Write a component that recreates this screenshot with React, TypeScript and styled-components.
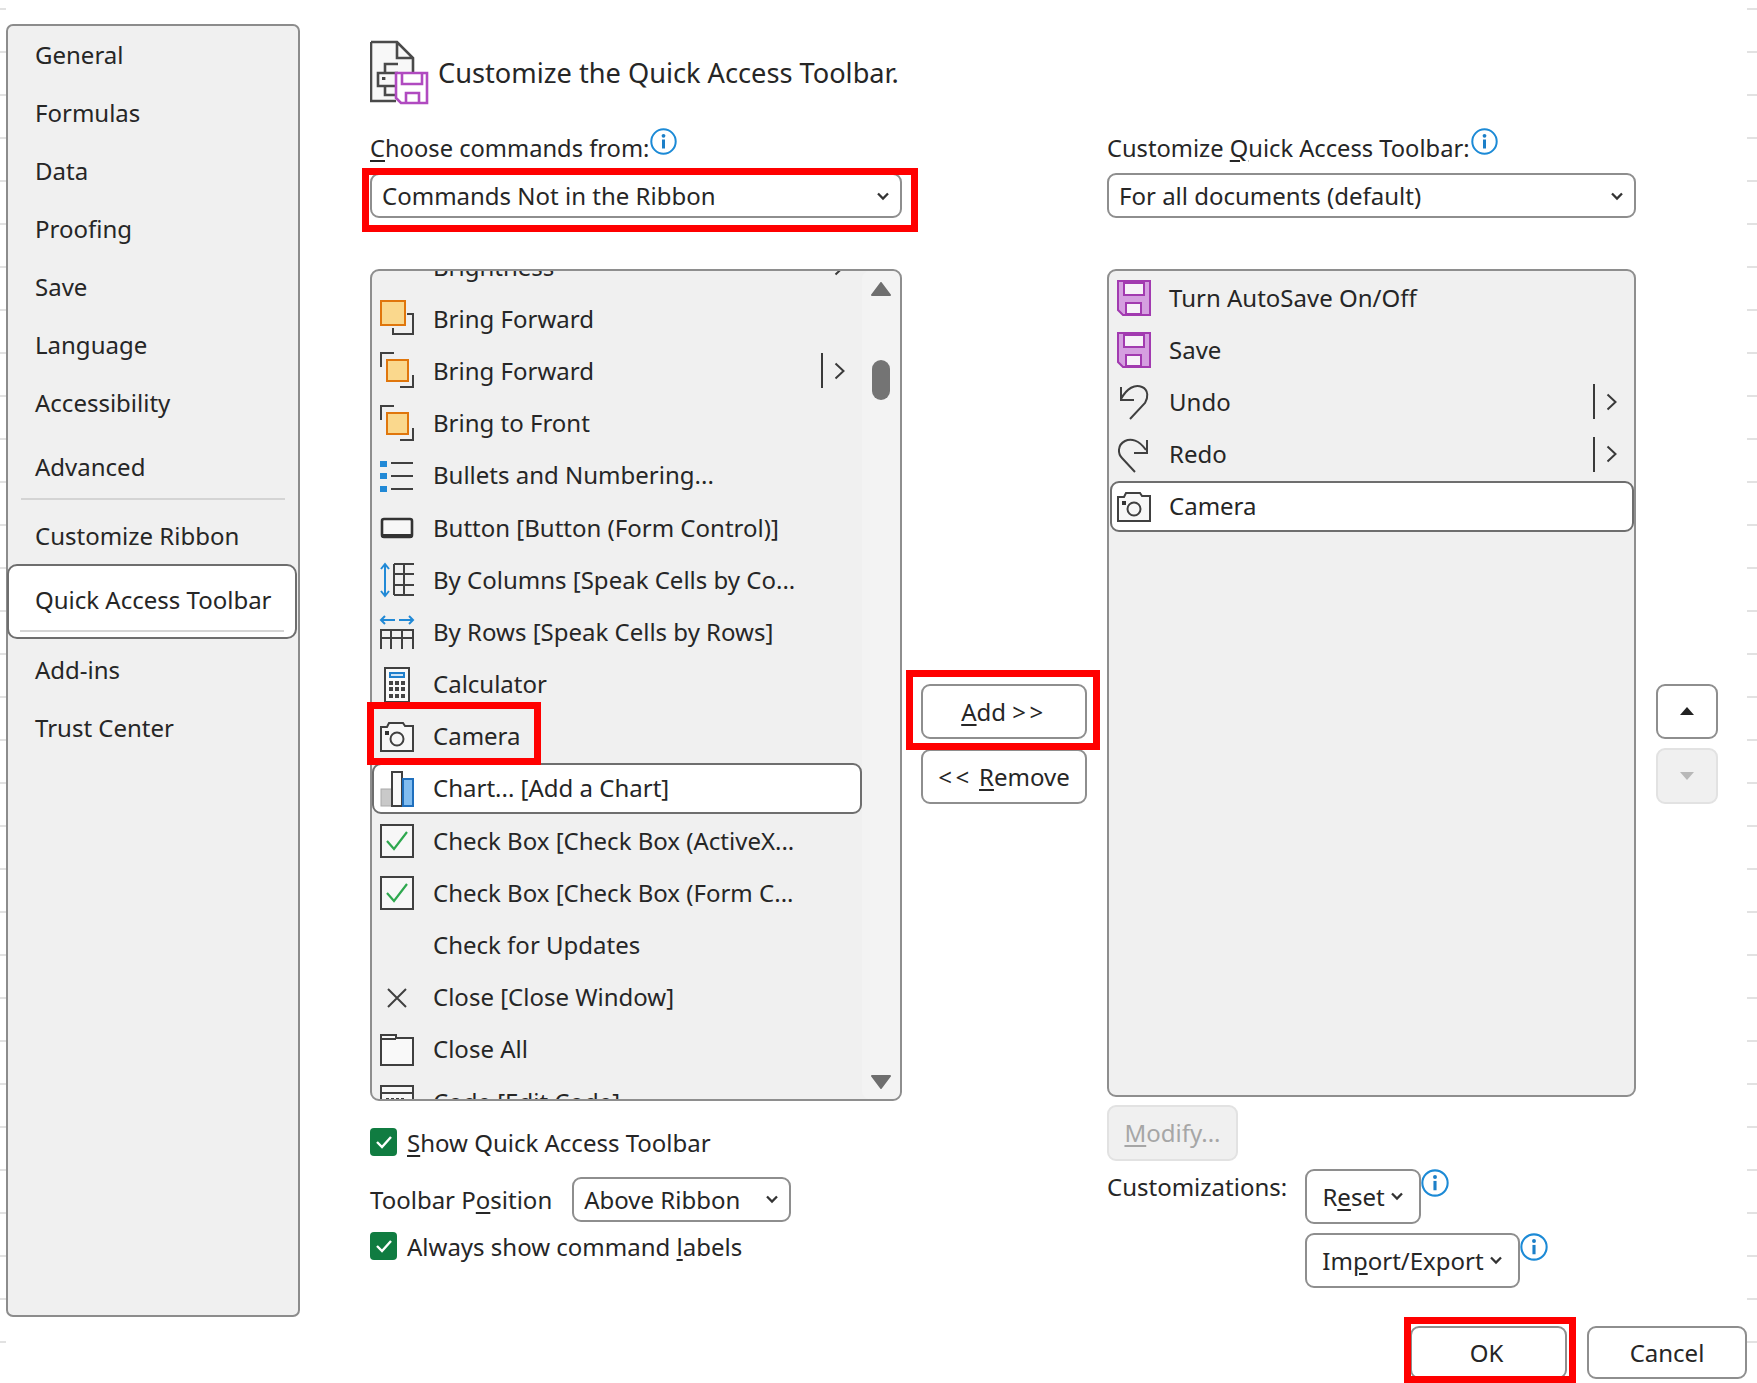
import React from "react";
import styled, { createGlobalStyle } from "styled-components";

const Global = createGlobalStyle`
  html, body { margin: 0; padding: 0; background: #fff; }
  #root { width: 1757px; height: 1383px; }
  * { box-sizing: border-box; }
`;

const tick = "repeating-linear-gradient(to bottom, transparent 0, transparent 8px, #e2e2e2 8px, #e2e2e2 10px, transparent 10px, transparent 43px)";

const Page = styled.div`
  position: relative;
  width: 1757px;
  height: 1383px;
  overflow: hidden;
  background-color: #fff;
  background-image: ${tick}, ${tick};
  background-size: 6px 1346px, 10px 1346px;
  background-position: left top, right top;
  background-repeat: no-repeat;
  font-family: "Noto Sans", "Open Sans", sans-serif;
  font-size: 24px;
  color: #262626;
  display: grid;
  grid-template-columns: 298px 1fr;
  padding: 24px 0 0 6px;
  u { text-underline-offset: 3px; text-decoration-thickness: 2px; }
`;

const Nav = styled.nav`
  width: 294px;
  height: 1293px;
  background: #f0f0f0;
  border: 2px solid #8c8c8c;
  border-radius: 7px;
  display: flex;
  flex-direction: column;
  align-items: stretch;
`;

const NavItem = styled.div<{ $h?: number; $shift?: number }>`
  height: ${(p) => p.$h ?? 58}px;
  display: flex;
  align-items: center;
  padding-left: 27px;
  padding-top: ${(p) => Math.max(p.$shift ?? 0, 0)}px;
  padding-bottom: ${(p) => Math.max(-(p.$shift ?? 0), 0)}px;
  flex: none;
`;

const NavRule = styled.div`
  height: 2px;
  margin: 0 13px;
  background: #d4d4d4;
  flex: none;
`;

const NavActive = styled.div`
  height: 75px;
  margin: 0 1px 0 -1px;
  background: #fff;
  border: 2px solid #6e6e6e;
  border-radius: 10px;
  display: flex;
  flex-direction: column;
  flex: none;
  padding: 0 0 4px 26px;
  position: relative;
  justify-content: center;
  &::after {
    content: "";
    position: absolute;
    left: 11px;
    right: 11px;
    bottom: 5px;
    height: 2px;
    background: #d4d4d4;
  }
`;

const Main = styled.main`
  display: flex;
  flex-direction: column;
  padding: 0 0 4px 66px;
`;

const Header = styled.header`
  height: 99px;
  margin-top: -8px;
  display: flex;
  align-items: center;
  gap: 8px;
  font-size: 27.2px;
  padding-top: 14px;
  flex: none;
`;

const Columns = styled.div`
  display: grid;
  grid-template-columns: 532px 205px 529px 1fr;
  flex: 1;
`;

const Column = styled.section`
  display: flex;
  flex-direction: column;
`;

const Label = styled.div`
  height: 50px;
  margin-bottom: 8px;
  display: flex;
  align-items: flex-end;
  line-height: 34px;
  font-size: 23.7px;
  white-space: nowrap;
`;

const Info = styled.svg`
  width: 27px;
  height: 27px;
  flex: none;
  position: relative;
  top: -10px;
  margin-left: 1px;
`;

const Select = styled.div<{ $w?: number }>`
  position: relative;
  height: 45px;
  width: ${(p) => (p.$w ? `${p.$w}px` : "100%")};
  border: 2px solid #8e8e8e;
  border-radius: 9px;
  background: #fff;
  display: flex;
  align-items: center;
  justify-content: space-between;
  padding: 0 10px 0 10px;
  flex: none;
`;

const Caret = styled.svg`
  width: 14px;
  height: 10px;
  flex: none;
`;

const List = styled.div<{ $h: number }>`
  position: relative;
  height: ${(p) => p.$h}px;
  margin-top: 51px;
  background: #f0f0f0;
  border: 2px solid #8e8e8e;
  border-radius: 9px;
  flex: none;
`;

const ListClip = styled.div<{ $top?: number }>`
  position: relative;
  height: 100%;
  overflow: hidden;
  border-radius: 7px;
  padding-top: ${(p) => p.$top ?? 0}px;
`;

const ScrollRows = styled.div`
  margin-top: -30px;
  padding-right: 38px;
`;

const Row = styled.div`
  position: relative;
  height: 52.2px;
  display: flex;
  align-items: center;
  padding-left: 8px;
  white-space: nowrap;
  &[data-sel="true"]::before {
    content: "";
    position: absolute;
    inset: 0 0 1px 0;
    background: #fff;
    border: 2px solid #6e6e6e;
    border-radius: 9px;
  }
`;

const RowIcon = styled.span`
  position: relative;
  width: 34px;
  height: 38px;
  margin-right: 19px;
  flex: none;
  display: flex;
  align-items: center;
  justify-content: center;
  svg { display: block; overflow: visible; }
`;

const FixedRows = styled.div`
  ${Row}[data-sel="true"]::before { left: 1px; }
  ${RowIcon} { margin-right: 18px; }
`;

const RowText = styled.span`
  position: relative;
  padding-bottom: 2px;
`;

const Sub = styled.span<{ $bare?: boolean }>`
  position: absolute;
  right: 17px;
  top: 8px;
  height: 35px;
  display: flex;
  align-items: center;
  gap: 11px;
  &::before {
    content: "";
    width: 2px;
    height: 35px;
    background: ${(p) => (p.$bare ? "transparent" : "#3a3a3a")};
  }
`;

const Track = styled.div`
  position: absolute;
  right: 0;
  top: 0;
  bottom: 0;
  width: 38px;
  background: #f3f3f3;
  border-radius: 8px;
  display: flex;
  flex-direction: column;
  align-items: center;
  padding: 11px 0 10px 0;
`;

const Thumb = styled.div`
  width: 18px;
  height: 40px;
  margin-top: 63px;
  background: #747474;
  border-radius: 9px;
  flex: none;
`;

const TrackSpacer = styled.div`
  flex: 1;
`;

const Arrow = styled.svg`
  width: 20px;
  height: 15px;
  flex: none;
`;

const Mid = styled(Column)`
  padding: 0 0 0 19px;
  margin-top: 569px;
  gap: 10px;
`;

const Btn = styled.div<{ $w?: number; $h?: number; $off?: boolean }>`
  position: relative;
  width: ${(p) => p.$w ?? 166}px;
  height: ${(p) => p.$h ?? 55}px;
  border: 2px solid ${(p) => (p.$off ? "#e2e2e2" : "#8e8e8e")};
  background: ${(p) => (p.$off ? "#f0f0f0" : "#fff")};
  color: ${(p) => (p.$off ? "#a6a6a6" : "#262626")};
  border-radius: 9px;
  display: flex;
  align-items: center;
  justify-content: center;
  gap: 5px;
  flex: none;
  padding-bottom: 1px;
  white-space: nowrap;
`;

const Chevrons = styled.span`
  letter-spacing: 3.5px;
`;

const ModifyBtn = styled(Btn)`
  margin-top: 8px;
`;

const OkBtn = styled(Btn)`
  padding-right: 4px;
`;

const Highlight = styled.span<{ $t: number; $r: number; $b: number; $l: number }>`
  position: absolute;
  top: ${(p) => -p.$t}px;
  right: ${(p) => -p.$r}px;
  bottom: ${(p) => -p.$b}px;
  left: ${(p) => -p.$l}px;
  border: 7px solid #ff0000;
  pointer-events: none;
  z-index: 3;
`;

const CheckRow = styled.div<{ $mt: number }>`
  display: flex;
  align-items: center;
  gap: 10px;
  margin-top: ${(p) => p.$mt}px;
  height: 30px;
`;

const Check = styled.span`
  width: 27px;
  height: 28px;
  background: #107c41;
  border-radius: 4px;
  display: flex;
  align-items: center;
  justify-content: center;
  flex: none;
`;

const PositionRow = styled.div`
  display: flex;
  align-items: center;
  gap: 20px;
  margin-top: 19px;
  height: 46px;
`;

const CustomRow = styled.div`
  display: grid;
  grid-template-columns: 198px auto;
  margin-top: 8px;
`;

const CustomLabel = styled.div`
  padding-top: 1px;
`;

const Stack = styled.div`
  display: flex;
  flex-direction: column;
  gap: 9px;
`;

const StackLine = styled.div`
  display: flex;
  align-items: flex-start;
`;

const SmallInfo = styled.svg`
  width: 28px;
  height: 28px;
  flex: none;
`;

const Side = styled(Column)`
  padding-left: 20px;
  margin-top: 569px;
  gap: 9px;
`;

const Footer = styled.footer`
  position: relative;
  display: flex;
  justify-content: flex-end;
  gap: 20px;
  padding-right: 10px;
  margin-top: -53px;
  flex: none;
`;

const info = (
  <>
    <circle cx="13.5" cy="13.5" r="12.2" fill="#fff" stroke="#1c8ad6" strokeWidth="2" />
    <rect x="12" y="11.5" width="3" height="9" fill="#1c7fc8" />
    <circle cx="13.5" cy="7.8" r="1.9" fill="#1c7fc8" />
  </>
);

const InfoIcon = () => <Info viewBox="0 0 27 27">{info}</Info>;

const CaretIcon = () => (
  <Caret viewBox="0 0 14 10">
    <path d="M2 2.5 L7 7.5 L12 2.5" fill="none" stroke="#333" strokeWidth="2.3" />
  </Caret>
);

const S = 34;
const Ico = ({ children, w = S, h = S }: { children: React.ReactNode; w?: number; h?: number }) => (
  <svg width={w} height={h} viewBox={`0 0 ${w} ${h}`} fill="none">{children}</svg>
);

const dark = "#404040";
const orange = "#e0760c";
const peach = "#fad88d";

const Brightness = () => (
  <Ico>
    <circle cx="17" cy="4" r="7" fill={peach} stroke={orange} strokeWidth="2" />
    <path d="M17 15v5M8 13l-3 4M26 13l3 4M2 5H7M27 5h5" stroke={orange} strokeWidth="2" />
  </Ico>
);
const BringForward1 = () => (
  <Ico h={38}>
    <path d="M27 14h6v20H13v-6" stroke={dark} strokeWidth="2" />
    <rect x="1" y="1" width="24" height="24" fill={peach} stroke={orange} strokeWidth="2" />
  </Ico>
);
const BringForward2 = () => (
  <Ico h={38}>
    <path d="M1 15V1h13" stroke={dark} strokeWidth="2" />
    <path d="M33 23v12H20" stroke={dark} strokeWidth="2" />
    <rect x="7" y="8" width="21" height="21" fill={peach} stroke={orange} strokeWidth="2" />
  </Ico>
);
const Bullets = () => (
  <Ico>
    <rect x="0" y="2" width="7" height="6" fill="#2189d6" />
    <rect x="0" y="14" width="7" height="6" fill="#2189d6" />
    <rect x="0" y="27" width="7" height="6" fill="#2189d6" />
    <path d="M11 4h22M11 17h22M11 30h22" stroke={dark} strokeWidth="2" />
  </Ico>
);
const ButtonCtl = () => (
  <Ico h={22}>
    <rect x="2" y="2" width="30" height="18" rx="2" fill="#f7f7f7" stroke="#333" strokeWidth="2.6" />
    <path d="M2 19h30" stroke="#333" strokeWidth="4" />
  </Ico>
);
const ByCols = () => (
  <Ico h={36}>
    <path d="M5 2v32" stroke="#2189d6" strokeWidth="2" />
    <path d="M1 7l4-5 4 5M1 29l4 5 4-5" stroke="#2189d6" strokeWidth="2" />
    <path d="M14 2h20M14 12h20M14 23h20M14 33h20M14 2v31M24 2v31" stroke={dark} strokeWidth="2" />
  </Ico>
);
const ByRows = () => (
  <Ico h={36}>
    <path d="M1 6h14M5 2L1 6l4 4M19 6h14M29 2l4 4-4 4" stroke="#2189d6" strokeWidth="2" />
    <path d="M1 35V16h32v19M1 24h32M11 16v19M22 16v19" stroke={dark} strokeWidth="2" />
  </Ico>
);
const Calc = () => (
  <Ico h={36}>
    <rect x="5" y="1" width="24" height="34" fill="#fafafa" stroke={dark} strokeWidth="2" />
    <rect x="9" y="5" width="16" height="6" fill="#1f7fcc" />
    <rect x="11" y="7" width="12" height="2" fill="#cfe4f6" />
    {[14, 20, 27].flatMap((y) =>
      [9, 15, 21].map((x) => <rect key={`${x}-${y}`} x={x} y={y} width="4" height="4" fill="#444" />)
    )}
  </Ico>
);
const Camera = () => (
  <Ico h={30}>
    <path d="M1 29V5h6l2-4h14l2 3h8v25z" fill="#f7f7f7" stroke={dark} strokeWidth="2" />
    <circle cx="17" cy="17" r="6.5" stroke={dark} strokeWidth="2" />
    <rect x="5" y="9" width="4" height="4" fill="#333" />
  </Ico>
);
const Chart = () => (
  <Ico h={36}>
    <rect x="1" y="18" width="11" height="17" fill="#c9c9c9" stroke="#aaa" />
    <rect x="12" y="1" width="10" height="34" fill="#fafafa" stroke={dark} strokeWidth="2" />
    <rect x="23" y="8" width="10" height="27" fill="#82bdf0" stroke="#1f6fbd" strokeWidth="2" />
  </Ico>
);
const CheckIco = () => (
  <Ico>
    <rect x="1" y="1" width="32" height="32" fill="#f7f7f7" stroke={dark} strokeWidth="2" />
    <path d="M7 17l7 8L27 8" stroke="#2ea84f" strokeWidth="2.2" />
  </Ico>
);
const CloseX = () => (
  <Ico h={20}>
    <path d="M8 1l18 18M26 1L8 19" stroke={dark} strokeWidth="2" />
  </Ico>
);
const CloseAll = () => (
  <Ico h={32}>
    <path d="M1 31V1h15v3h17v27z" fill="#f9f9f9" stroke="#3f3f3f" strokeWidth="2" />
    <path d="M1 5h15" stroke="#3f3f3f" strokeWidth="2" />
  </Ico>
);
const Code = () => (
  <Ico h={34}>
    <rect x="1" y="1" width="32" height="32" fill="#f7f7f7" stroke={dark} strokeWidth="2" />
    <path d="M1 8h32" stroke={dark} strokeWidth="2" />
    <path d="M6 14h20" stroke={dark} strokeWidth="2" strokeDasharray="3 2" />
    <circle cx="30" cy="17" r="3" fill="#2189d6" />
  </Ico>
);
const Floppy = () => (
  <Ico h={36}>
    <path d="M1 1h32v34H6l-5-5z" fill="#d59fe0" stroke="#a23ab0" strokeWidth="2" />
    <rect x="7" y="3" width="20" height="12" fill="#f7f2f8" stroke="#a23ab0" strokeWidth="2" />
    <rect x="9" y="23" width="15" height="11" fill="#f7f2f8" stroke="#a23ab0" strokeWidth="2" />
  </Ico>
);
const Undo = () => (
  <Ico h={36}>
    <path d="M4 3v13h13" stroke={dark} strokeWidth="2" />
    <path d="M4 15C10 4 18 0 25 3c7 3 6 11 3 16L13 35" stroke={dark} strokeWidth="2" />
  </Ico>
);
const Redo = () => (
  <Ico h={36}>
    <path d="M30 3v13H17" stroke={dark} strokeWidth="2" />
    <path d="M29 13C22 3 14 1 8 4 0 8 1 17 5 21l13 14" stroke={dark} strokeWidth="2" />
  </Ico>
);

const Chevron = () => (
  <svg width="11" height="18" viewBox="0 0 11 18" fill="none">
    <path d="M1.5 1.5 L9.5 9 L1.5 16.5" stroke="#3a3a3a" strokeWidth="2" />
  </svg>
);

const HeaderIcon = () => (
  <svg width="60" height="66" viewBox="0 0 60 66" fill="none">
    <path d="M1 2h26l16 16v44H1z" fill="#f8f8f8" />
    <path d="M27 2v16h16M1 2h26l16 16v15M1 2v59h25" stroke="#4a4a4a" strokeWidth="2.6" />
    <path d="M28 24H15v9H8v13h7v9h11M15 33h13M15 46h10" stroke="#4a4a4a" strokeWidth="2.6" />
    <rect x="12" y="37" width="3.4" height="3" fill="#444" />
    <path d="M26 33h31v30H31l-5-5z" fill="#fff" stroke="#b04ac0" strokeWidth="2.6" />
    <path d="M32 33v11h20V33M36 63V53h13v10" stroke="#b04ac0" strokeWidth="2.6" />
  </svg>
);

type Item = { icon?: React.ReactNode; text: string; sub?: boolean; bare?: boolean; sel?: boolean };

const leftItems: Item[] = [
  { icon: <Brightness />, text: "Brightness", sub: true, bare: true },
  { icon: <BringForward1 />, text: "Bring Forward" },
  { icon: <BringForward2 />, text: "Bring Forward", sub: true },
  { icon: <BringForward2 />, text: "Bring to Front" },
  { icon: <Bullets />, text: "Bullets and Numbering..." },
  { icon: <ButtonCtl />, text: "Button [Button (Form Control)]" },
  { icon: <ByCols />, text: "By Columns [Speak Cells by Co..." },
  { icon: <ByRows />, text: "By Rows [Speak Cells by Rows]" },
  { icon: <Calc />, text: "Calculator" },
  { icon: <Camera />, text: "Camera" },
  { icon: <Chart />, text: "Chart... [Add a Chart]", sel: true },
  { icon: <CheckIco />, text: "Check Box [Check Box (ActiveX..." },
  { icon: <CheckIco />, text: "Check Box [Check Box (Form C..." },
  { text: "Check for Updates" },
  { icon: <CloseX />, text: "Close [Close Window]" },
  { icon: <CloseAll />, text: "Close All" },
  { icon: <Code />, text: "Code [Edit Code]" },
];

const rightItems: Item[] = [
  { icon: <Floppy />, text: "Turn AutoSave On/Off" },
  { icon: <Floppy />, text: "Save" },
  { icon: <Undo />, text: "Undo", sub: true },
  { icon: <Redo />, text: "Redo", sub: true },
  { icon: <Camera />, text: "Camera", sel: true },
];

const ListRow = ({ item }: { item: Item }) => (
  <Row data-sel={item.sel ? "true" : undefined}>
    <RowIcon>{item.icon}</RowIcon>
    <RowText>{item.text}</RowText>
    {item.sub && (
      <Sub $bare={item.bare}>
        <Chevron />
      </Sub>
    )}
  </Row>
);

const Tick = () => (
  <Check>
    <svg width="18" height="14" viewBox="0 0 18 14" fill="none"><path d="M2 7l5 5 9-10" stroke="#fff" strokeWidth="2.4" /></svg>
  </Check>
);

export default function App() {
  return (
    <>
      <Global />
      <Page>
        <Nav>
          <NavItem $shift={-2}>General</NavItem>
          <NavItem $shift={-2}>Formulas</NavItem>
          <NavItem $shift={-2}>Data</NavItem>
          <NavItem $shift={-2}>Proofing</NavItem>
          <NavItem $shift={-2}>Save</NavItem>
          <NavItem $shift={-2}>Language</NavItem>
          <NavItem $shift={-2}>Accessibility</NavItem>
          <NavItem $h={66} $shift={2}>Advanced</NavItem>
          <NavRule />
          <NavItem $h={64} $shift={6}>Customize Ribbon</NavItem>
          <NavActive>Quick Access Toolbar</NavActive>
          <NavItem $shift={2}>Add-ins</NavItem>
          <NavItem $shift={2}>Trust Center</NavItem>
        </Nav>
        <Main>
          <Header>
            <HeaderIcon />
            <span>Customize the Quick Access Toolbar.</span>
          </Header>
          <Columns>
            <Column>
              <Label>
                <span><u>C</u>hoose commands from:</span>
                <InfoIcon />
              </Label>
              <Select>
                <span>Commands Not in the Ribbon</span>
                <CaretIcon />
                <Highlight $t={7} $r={18} $b={16} $l={10} />
              </Select>
              <List $h={832}>
                <ListClip>
                  <ScrollRows>
                    {leftItems.map((it, i) => <ListRow key={i} item={it} />)}
                  </ScrollRows>
                  <Track>
                    <Arrow viewBox="0 0 20 15"><path d="M10 1L19 13H1z" fill="#6e6e6e" stroke="#6e6e6e" strokeLinejoin="round" strokeWidth="2" /></Arrow>
                    <Thumb />
                    <TrackSpacer />
                    <Arrow viewBox="0 0 20 15"><path d="M10 14L19 2H1z" fill="#6e6e6e" stroke="#6e6e6e" strokeLinejoin="round" strokeWidth="2" /></Arrow>
                  </Track>
                </ListClip>
                <Highlight $t={-431} $r={-359} $b={-334} $l={5} />
              </List>
              <CheckRow $mt={26}>
                <Tick />
                <span><u>S</u>how Quick Access Toolbar</span>
              </CheckRow>
              <PositionRow>
                <span>Toolbar P<u>o</u>sition</span>
                <Select $w={219}>
                  <span>Above Ribbon</span>
                  <CaretIcon />
                </Select>
              </PositionRow>
              <CheckRow $mt={9}>
                <Tick />
                <span>Always show command <u>l</u>abels</span>
              </CheckRow>
            </Column>
            <Mid>
              <Btn>
                <span><u>A</u>dd <Chevrons>&gt;&gt;</Chevrons></span>
                <Highlight $t={16} $r={15} $b={13} $l={17} />
              </Btn>
              <Btn>
                <span><Chevrons>&lt;&lt;</Chevrons> <u>R</u>emove</span>
              </Btn>
            </Mid>
            <Column>
              <Label>
                <span>Customize <u>Q</u>uick Access Toolbar:</span>
                <InfoIcon />
              </Label>
              <Select>
                <span>For all documents (default)</span>
                <CaretIcon />
              </Select>
              <List $h={828}>
                <ListClip $top={1}>
                  <FixedRows>
                    {rightItems.map((it, i) => <ListRow key={i} item={it} />)}
                  </FixedRows>
                </ListClip>
              </List>
              <ModifyBtn $w={131} $h={56} $off>
                <span><u>M</u>odify...</span>
              </ModifyBtn>
              <CustomRow>
                <CustomLabel>Customizations:</CustomLabel>
                <Stack>
                  <StackLine>
                    <Btn $w={116}>
                      <span>R<u>e</u>set</span>
                      <CaretIcon />
                    </Btn>
                    <SmallInfo viewBox="0 0 27 27">{info}</SmallInfo>
                  </StackLine>
                  <StackLine>
                    <Btn $w={215}>
                      <span>Im<u>p</u>ort/Export</span>
                      <CaretIcon />
                    </Btn>
                    <SmallInfo viewBox="0 0 27 27">{info}</SmallInfo>
                  </StackLine>
                </Stack>
              </CustomRow>
            </Column>
            <Side>
              <Btn $w={62} $h={55}>
                <svg width="16" height="10" viewBox="0 0 16 10"><path d="M8 1l7 8H1z" fill="#222" /></svg>
              </Btn>
              <Btn $w={62} $h={56} $off>
                <svg width="16" height="10" viewBox="0 0 16 10"><path d="M8 9l7-8H1z" fill="#b8b8b8" /></svg>
              </Btn>
            </Side>
          </Columns>
          <Footer>
            <OkBtn $w={157} $h={53}>
              <span>OK</span>
              <Highlight $t={11} $r={11} $b={6} $l={8} />
            </OkBtn>
            <Btn $w={160} $h={53}>
              <span>Cancel</span>
            </Btn>
          </Footer>
        </Main>
      </Page>
    </>
  );
}
